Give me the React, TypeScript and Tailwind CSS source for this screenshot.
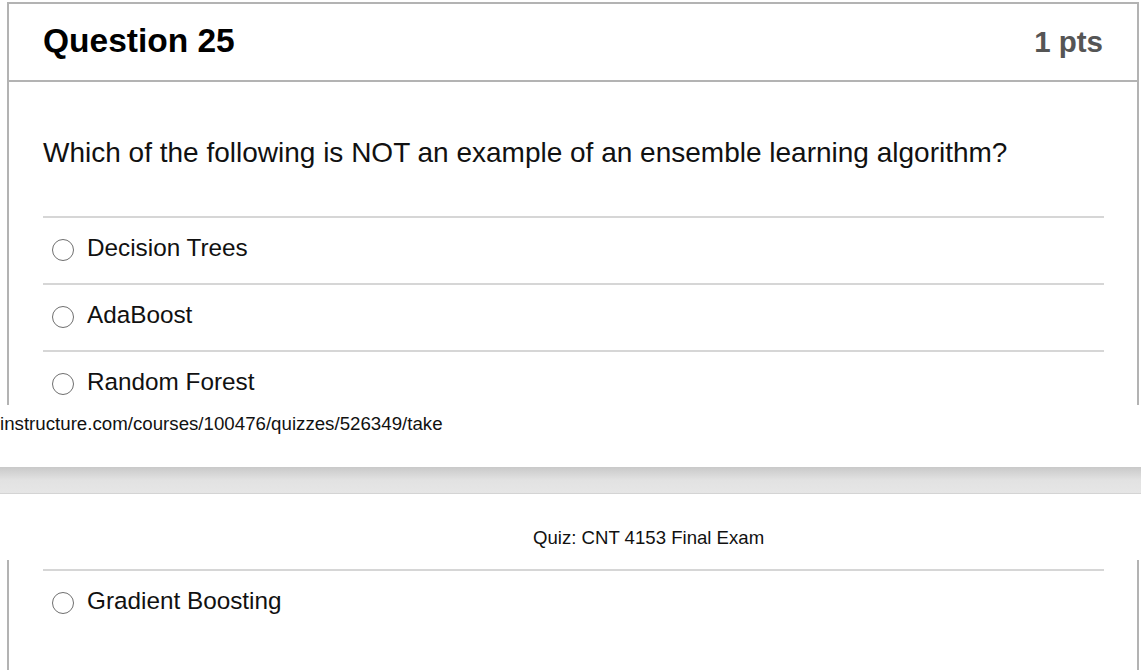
import React from "react";

const firstAnswers = ["Decision Trees", "AdaBoost", "Random Forest"];

const Radio = () => (
  <span className="block w-[22px] h-[22px] shrink-0 rounded-full border-[1.5px] border-[#6f6f6f] bg-white" />
);

const AnswerRow = ({ label }: { label: string }) => (
  <div className="flex items-center h-[67px] border-t-2 border-[#d6d6d6] pl-[9px] pb-[2px]">
    <Radio />
    <span className="ml-[13px] mb-[2px] text-[24.3px] leading-none text-[#111]">{label}</span>
  </div>
);

export default function App() {
  return (
    <div className="w-[1141px] h-[670px] overflow-hidden bg-white font-['Liberation_Sans',Arial,sans-serif] text-black">
      {/* printed page 1 */}
      <div className="h-[405px] overflow-hidden pt-[2px]">
        <div className="ml-[7px] w-[1132px] border-x-2 border-t-2 border-[#b3b3b3]">
          <div className="flex items-center justify-between h-[78px] px-[34px] border-b-2 border-[#b3b3b3]">
            <h2 className="text-[33.5px] font-bold leading-none mb-[3px]">Question 25</h2>
            <span className="text-[29.5px] font-bold leading-none text-[#555]">1 pts</span>
          </div>
          <div className="pl-[34px] pr-[33px] pt-[55px]">
            <p className="text-[28px] leading-[32px] text-[#111] mb-[47px]">
              Which of the following is NOT an example of an ensemble learning algorithm?
            </p>
            {firstAnswers.map((a) => (
              <AnswerRow key={a} label={a} />
            ))}
          </div>
        </div>
      </div>

      {/* print footer + page gap */}
      <div className="h-[62px] pt-[8px]">
        <p className="text-[18.7px] leading-[22px] text-[#111]">
          instructure.com/courses/100476/quizzes/526349/take
        </p>
      </div>
      <div className="h-[27px] bg-gradient-to-b from-[#c9c9c9] via-[#e2e2e2] to-[#e6e6e6] border-b border-[#d4d4d4]" />

      {/* printed page 2 */}
      <div className="pt-[33px] h-[66px]">
        <p className="ml-[533px] text-[18.6px] leading-[22px] text-[#111]">Quiz: CNT 4153 Final Exam</p>
      </div>
      <div className="ml-[7px] w-[1132px] h-[120px] border-x-2 border-[#b3b3b3] pt-[9px]">
        <div className="pl-[34px] pr-[33px]">
          <AnswerRow label="Gradient Boosting" />
        </div>
      </div>
    </div>
  );
}
